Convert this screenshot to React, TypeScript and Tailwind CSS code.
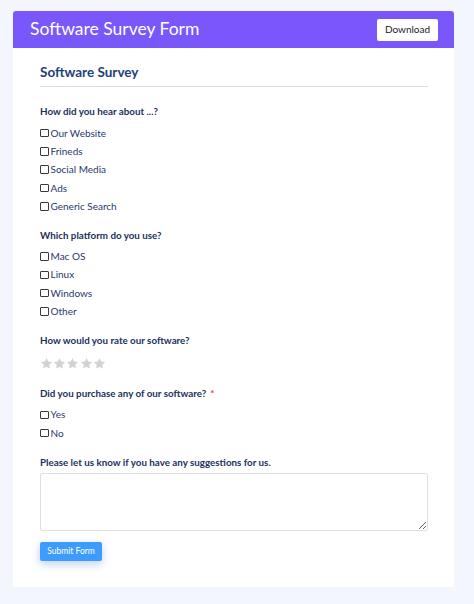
import React from "react";

const Check = ({ label }: { label: string }) => (
  <div className="flex h-[18.3px] items-center">
    <span className="mr-[2px] inline-block h-[8.5px] w-[8.5px] rounded-[1px] border border-[#3a3a3a] bg-white" />
    <span className="text-[10px] text-[#27386a]">{label}</span>
  </div>
);

const Label = ({ children, cls }: { children: React.ReactNode; cls: string }) => (
  <div className={"flex h-[16px] items-center text-[9.8px] font-bold text-[#22315c] " + cls}>{children}</div>
);

const Star = () => (
  <svg width="13" height="13" viewBox="0 0 24 24" className="mr-[0.2px]">
    <path
      d="M12 1.8l3.1 6.6 7.2.9-5.3 5 1.4 7.1L12 17.9l-6.4 3.5L7 14.3l-5.3-5 7.2-.9z"
      fill="#d2d2d2"
    />
  </svg>
);

export default function App() {
  return (
    <div
      className="min-h-[604px] w-[474px] bg-[#f3f7fd] pl-[13px] pt-[11px]"
      style={{ fontFamily: "Lato, 'Noto Sans', sans-serif" }}
    >
      <div className="w-[441px] rounded-t-[3px] bg-white">
        <div className="flex h-[37px] items-center justify-between rounded-t-[3px] bg-[#7a57fb] pl-[17px] pr-[16px]">
          <span className="text-[17.5px] text-white">Software Survey Form</span>
          <button className="h-[22px] w-[61px] rounded-[2px] bg-white text-[10px] text-[#222]">Download</button>
        </div>
        <div className="pb-[26px] pl-[27px] pr-[26px] pt-[14px]">
          <div className="flex h-[20px] items-center text-[13.5px] font-bold text-[#1d3f7c]">Software Survey</div>
          <div className="mt-[4px] border-b-[1.5px] border-[#d9dde3]" />

          <Label cls="mt-[16px]">How did you hear about ...?</Label>
          <div className="mt-[5px]">
            <Check label="Our Website" />
            <Check label="Frineds" />
            <Check label="Social Media" />
            <Check label="Ads" />
            <Check label="Generic Search" />
          </div>

          <Label cls="mt-[12px]">Which platform do you use?</Label>
          <div className="mt-[4px]">
            <Check label="Mac OS" />
            <Check label="Linux" />
            <Check label="Windows" />
            <Check label="Other" />
          </div>

          <Label cls="mt-[12px]">How would you rate our software?</Label>
          <div className="mt-[8.5px] flex">
            <Star />
            <Star />
            <Star />
            <Star />
            <Star />
          </div>

          <Label cls="mt-[15.5px]">
            Did you purchase any of our software?<span className="ml-[4px] text-[#e64848]">*</span>
          </Label>
          <div className="mt-[4px]">
            <Check label="Yes" />
            <Check label="No" />
          </div>

          <Label cls="mt-[12px]">Please let us know if you have any suggestions for us.</Label>
          <textarea className="mt-[3px] block h-[58px] w-full rounded-[2px] border border-[#dcdfe4] bg-white" />

          <button className="mt-[11px] h-[19px] w-[62px] rounded-[2px] bg-[#3d9bfb] text-[8.5px] text-white shadow-[0_3px_8px_rgba(60,120,200,0.35)]">
            Submit Form
          </button>
        </div>
      </div>
    </div>
  );
}
